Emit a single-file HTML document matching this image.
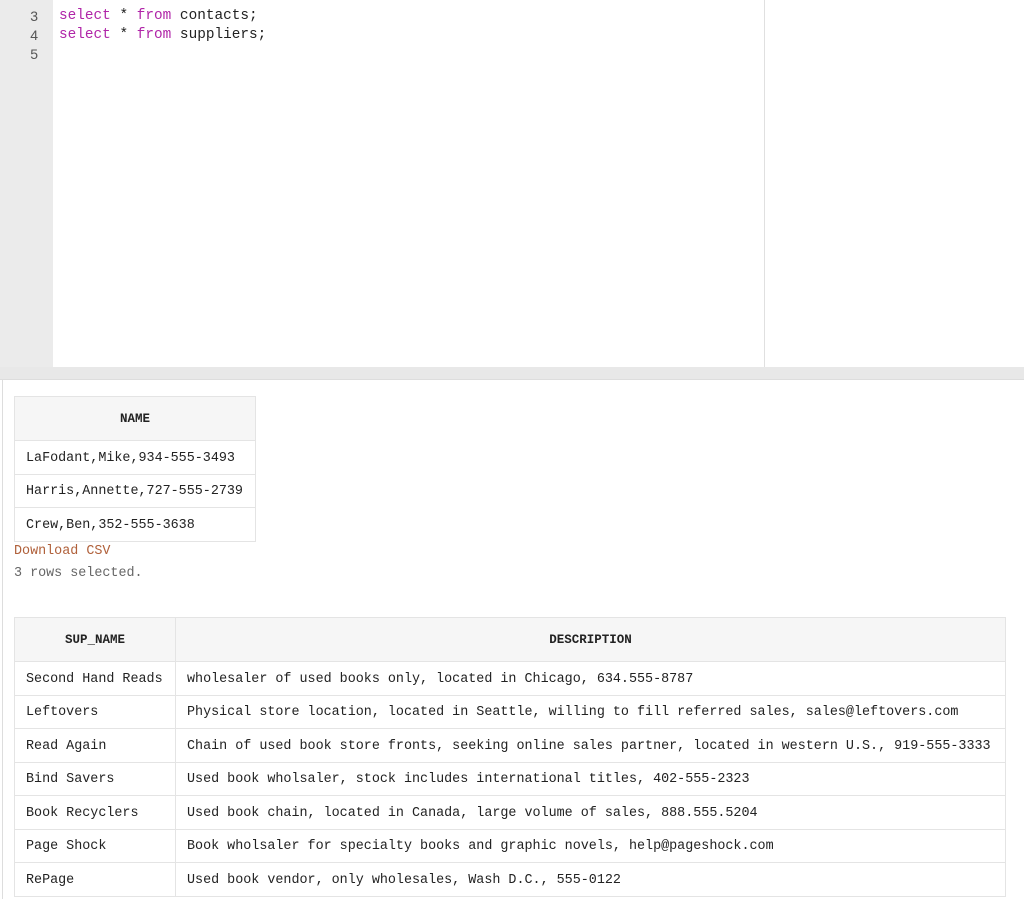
<!DOCTYPE html>
<html><head><style>
body{margin:0;width:1024px;height:899px;overflow:hidden;background:#fff;font-family:"Liberation Mono",monospace;position:relative}
.gut{position:absolute;left:0;top:0;width:53px;height:367px;background:#ebebeb}
.ed{position:absolute;left:764px;top:0;width:1px;height:367px;background:#e0e0e0}
.ln{position:absolute;left:0;width:38px;text-align:right;font-family:"Liberation Sans",sans-serif;font-size:14px;color:#555}
.code{position:absolute;left:59px;font-size:14.4px;color:#222;white-space:pre}
.k{color:#b025a8}
.bar{position:absolute;left:0;top:367px;width:1024px;height:12px;background:#e8e8e8;border-bottom:1px solid #ddd}
.pl{position:absolute;left:2px;top:379px;width:1px;height:520px;background:#ddd}
table{position:absolute;border-collapse:collapse;font-size:13.4px;color:#222}
td,th{border:1px solid #e4e4e4;padding:0 11px;text-align:left;white-space:nowrap}
th{background:#f6f6f6;height:43px;text-align:center;font-weight:bold;font-size:12.5px}
td{height:30.5px;padding-top:2px}
.t{position:absolute;left:14px;font-size:13.4px}
</style></head><body>
<div class="gut"></div><div class="ed"></div>
<div class="ln" style="top:-17px">2</div>
<div class="ln" style="top:8px">3</div>
<div class="ln" style="top:27px">4</div>
<div class="ln" style="top:46px">5</div>
<div class="code" style="top:8px"><span class="k">select</span> * <span class="k">from</span> contacts;</div>
<div class="code" style="top:27px"><span class="k">select</span> * <span class="k">from</span> suppliers;</div>
<div class="bar"></div><div class="pl"></div>
<table style="left:14px;top:396px;width:242px">
<tr><th>NAME</th></tr>
<tr><td>LaFodant,Mike,934-555-3493</td></tr>
<tr><td>Harris,Annette,727-555-2739</td></tr>
<tr><td>Crew,Ben,352-555-3638</td></tr>
</table>
<div class="t" style="top:544px;color:#b0603a">Download CSV</div>
<div class="t" style="top:566px;color:#666">3 rows selected.</div>
<table style="left:14px;top:617px;width:992px">
<tr><th style="width:138px">SUP_NAME</th><th>DESCRIPTION</th></tr>
<tr><td>Second Hand Reads</td><td>wholesaler of used books only, located in Chicago, 634.555-8787</td></tr>
<tr><td>Leftovers</td><td>Physical store location, located in Seattle, willing to fill referred sales, sales@leftovers.com</td></tr>
<tr><td>Read Again</td><td>Chain of used book store fronts, seeking online sales partner, located in western U.S., 919-555-3333</td></tr>
<tr><td>Bind Savers</td><td>Used book wholsaler, stock includes international titles, 402-555-2323</td></tr>
<tr><td>Book Recyclers</td><td>Used book chain, located in Canada, large volume of sales, 888.555.5204</td></tr>
<tr><td>Page Shock</td><td>Book wholsaler for specialty books and graphic novels, help@pageshock.com</td></tr>
<tr><td>RePage</td><td>Used book vendor, only wholesales, Wash D.C., 555-0122</td></tr>
</table>
</body></html>
